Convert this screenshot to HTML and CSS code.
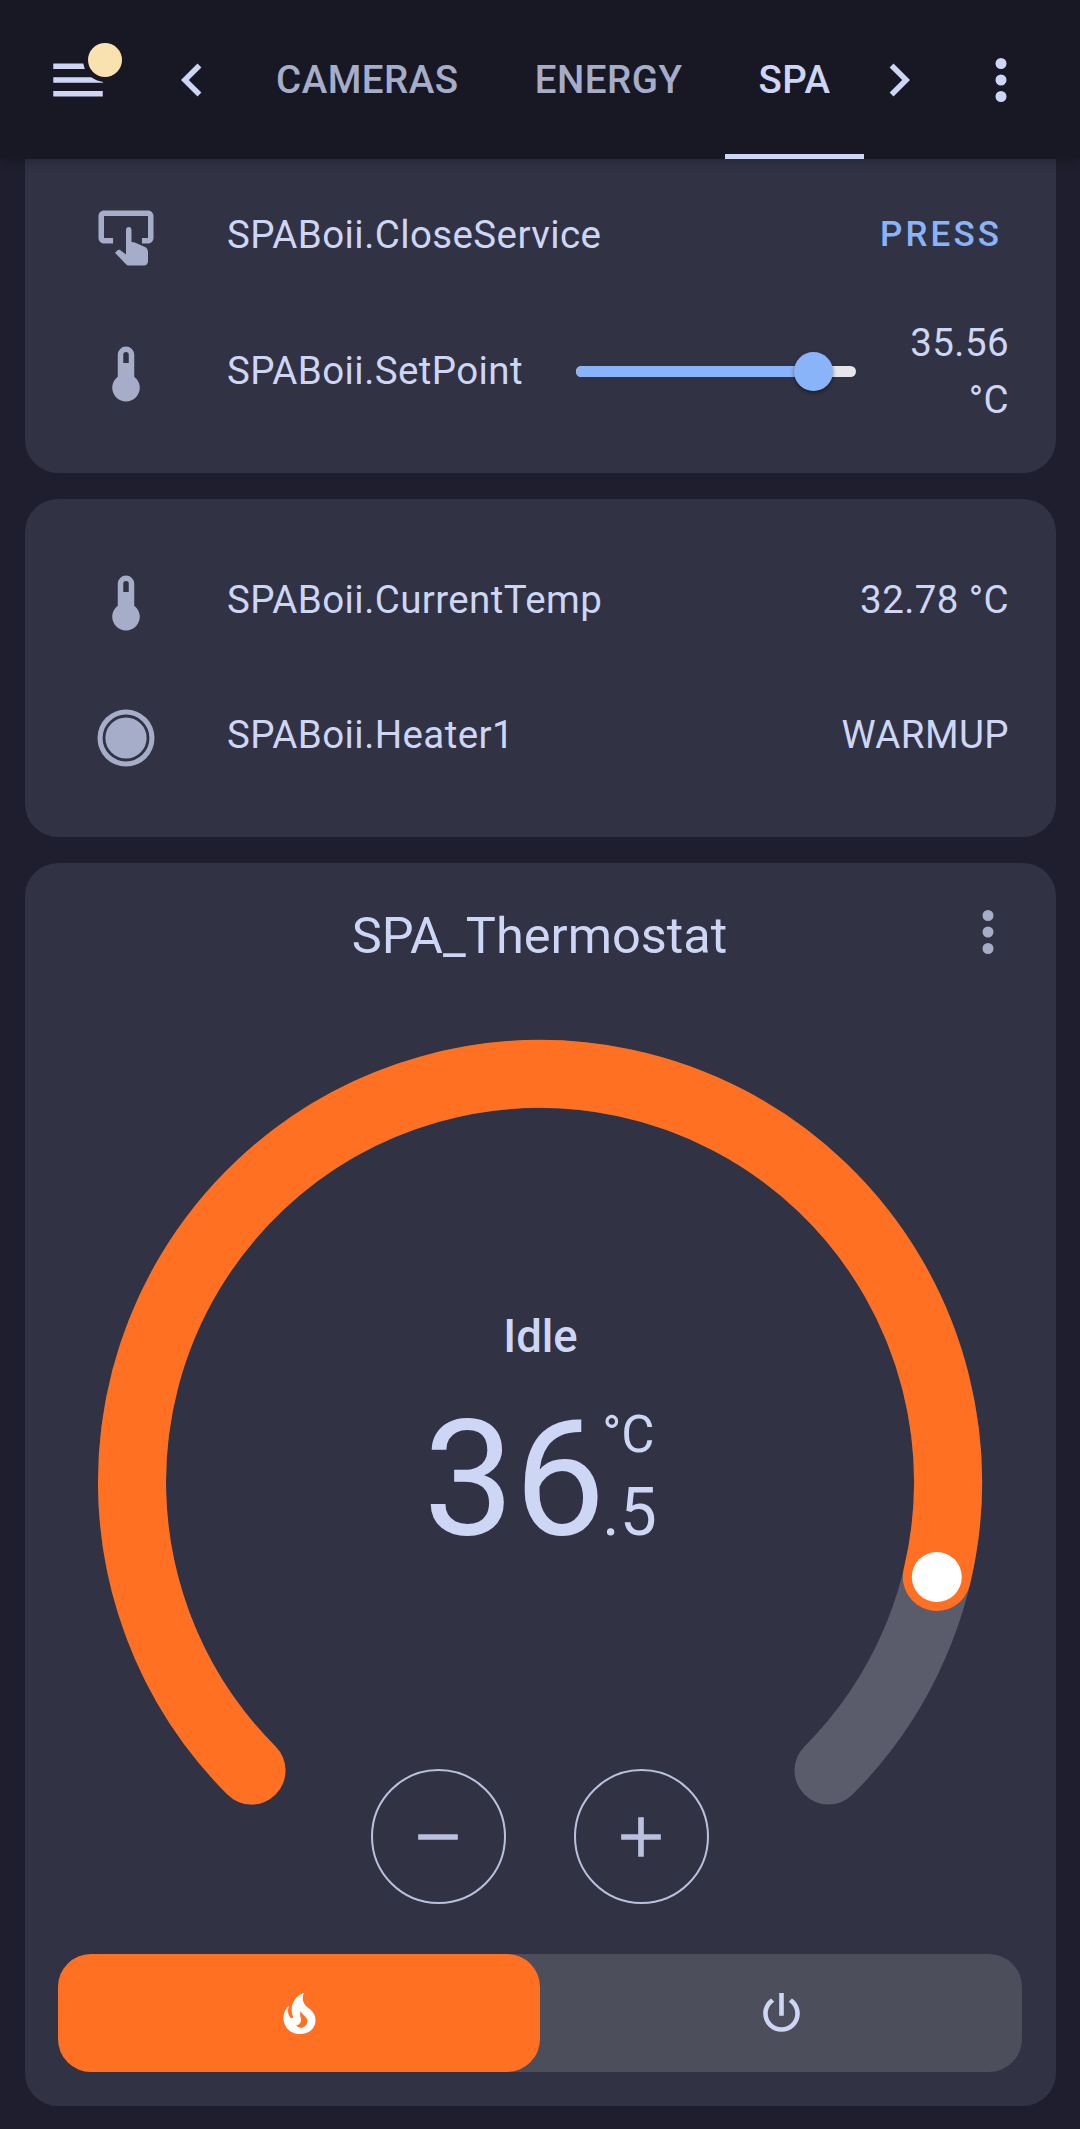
FILE: index.html
```html
<!DOCTYPE html>
<html lang="en">
<head>
<meta charset="utf-8">
<title>SPA</title>
<link rel="stylesheet" href="styles.css">
</head>
<body>
<header class="topbar">
  <div class="menu-btn">
    <svg class="icon icon--text" viewBox="0 0 24 24"><path d="M3 6H21V8H3ZM3 11H21V13H3ZM3 16H21V18H3Z"/></svg>
    <span class="badge"></span>
  </div>
  <svg class="icon icon--text chevron-left" viewBox="0 0 24 24"><path d="M15.41,16.58L10.83,12L15.41,7.41L14,6L8,12L14,18L15.41,16.58Z"/></svg>
  <nav class="tabs">
    <span class="tab">CAMERAS</span>
    <span class="tab">ENERGY</span>
    <span class="tab tab--active">SPA</span>
  </nav>
  <svg class="icon icon--text" viewBox="0 0 24 24"><path d="M8.59,16.58L13.17,12L8.59,7.41L10,6L16,12L10,18L8.59,16.58Z"/></svg>
  <svg class="icon icon--text topbar-dots" viewBox="0 0 24 24"><path d="M12,16A2,2 0 0,1 14,18A2,2 0 0,1 12,20A2,2 0 0,1 10,18A2,2 0 0,1 12,16M12,10A2,2 0 0,1 14,12A2,2 0 0,1 12,14A2,2 0 0,1 10,12A2,2 0 0,1 12,10M12,4A2,2 0 0,1 14,6A2,2 0 0,1 12,8A2,2 0 0,1 10,6A2,2 0 0,1 12,4Z"/></svg>
</header>

<main class="view">
  <section class="card card--scrolled">
    <div class="row">
      <svg class="icon icon--muted row-icon" viewBox="0 0 24 24"><path d="M7.3 14H4C2.9 14 2 13.1 2 12V4C2 2.9 2.9 2 4 2H20C21.1 2 22 2.9 22 4V12C22 13.1 21.1 14 20 14H17.8V12H20V4H4V12H7.3V14Z"/><path d="M12 9C12 8.45 12.45 8 13 8S14 8.45 14 9V13.47L15.21 13.6L18.9 15.3C19.6 15.6 20 16.3 20 17V20.5C19.97 21.32 19.32 22 18.5 22H13C12.62 22 12.26 21.85 12 21.57L8 17.37L8.74 16.6C8.93 16.39 9.2 16.28 9.5 16.28H9.7L12 18V9Z"/></svg>
      <span class="row-label">SPABoii.CloseService</span>
      <span class="press">PRESS</span>
    </div>
    <div class="row">
      <svg class="icon icon--muted row-icon" viewBox="0 0 24 24"><path d="M15 13V5A3 3 0 0 0 9 5V13A5 5 0 1 0 15 13M12 4A1 1 0 0 1 13 5V8H11V5A1 1 0 0 1 12 4Z"/></svg>
      <span class="row-label">SPABoii.SetPoint</span>
      <div class="slider"><div class="slider-fill" style="width:85%"><span class="slider-thumb"></span></div></div>
      <span class="row-value row-value--wrap">35.56 °C</span>
    </div>
  </section>

  <section class="card card--pair">
    <div class="row">
      <svg class="icon icon--muted row-icon" viewBox="0 0 24 24"><path d="M15 13V5A3 3 0 0 0 9 5V13A5 5 0 1 0 15 13M12 4A1 1 0 0 1 13 5V8H11V5A1 1 0 0 1 12 4Z"/></svg>
      <span class="row-label">SPABoii.CurrentTemp</span>
      <span class="row-value">32.78 °C</span>
    </div>
    <div class="row">
      <svg class="icon icon--muted row-icon" viewBox="0 0 66 66"><circle cx="33" cy="33" r="28.5"/><circle class="ring-gap" cx="33" cy="33" r="22"/></svg>
      <span class="row-label">SPABoii.Heater1</span>
      <span class="row-value">WARMUP</span>
    </div>
  </section>

  <section class="card card--climate">
    <div class="climate-head">
      <h2 class="climate-title">SPA_Thermostat</h2>
      <svg class="icon icon--muted climate-dots" viewBox="0 0 24 24"><path d="M12,16A2,2 0 0,1 14,18A2,2 0 0,1 12,20A2,2 0 0,1 10,18A2,2 0 0,1 12,16M12,10A2,2 0 0,1 14,12A2,2 0 0,1 12,14A2,2 0 0,1 10,12A2,2 0 0,1 12,10M12,4A2,2 0 0,1 14,6A2,2 0 0,1 12,8A2,2 0 0,1 10,6A2,2 0 0,1 12,4Z"/></svg>
    </div>
    <div class="gauge">
      <svg class="gauge-svg" viewBox="0 0 1031 769">
        <path class="gauge-track" d="M226.5 770.5A408 408 0 1 1 803.5 770.5"/>
        <path class="gauge-value" d="M226.5 770.5A408 408 0 1 1 911.8 577"/>
        <circle class="gauge-thumb" cx="911.8" cy="577" r="25"/>
      </svg>
      <div class="readout">
        <div class="readout-state">Idle</div>
        <div class="readout-temp">
          <span class="readout-int">36</span>
          <span class="readout-side">
            <span class="readout-unit">°C</span>
            <span class="readout-dec">.5</span>
          </span>
        </div>
      </div>
    </div>
    <div class="stepper">
      <span class="step"><svg class="icon step-icon" viewBox="0 0 24 24"><path d="M19,13H5V11H19V13Z"/></svg></span>
      <span class="step"><svg class="icon step-icon" viewBox="0 0 24 24"><path d="M19,13H13V19H11V13H5V11H11V5H13V11H19V13Z"/></svg></span>
    </div>
    <div class="modes">
      <div class="mode mode--active"><svg class="mode-icon mode-icon--white" viewBox="0 0 24 24"><path d="M17.66 11.2C17.43 10.9 17.15 10.64 16.89 10.38C16.22 9.78 15.46 9.35 14.82 8.72C13.33 7.26 13 4.85 13.95 3C13 3.23 12.17 3.75 11.46 4.32C8.87 6.4 7.85 10.07 9.07 13.22C9.11 13.32 9.15 13.42 9.15 13.55C9.15 13.77 9 13.97 8.8 14.05C8.57 14.15 8.33 14.09 8.14 13.93C8.08 13.88 8.04 13.83 8 13.76C6.87 12.33 6.69 10.28 7.45 8.64C5.78 10 4.87 12.3 5 14.47C5.06 14.97 5.12 15.47 5.29 15.97C5.43 16.57 5.7 17.17 6 17.7C7.08 19.43 8.95 20.67 10.96 20.92C13.1 21.19 15.39 20.8 17.03 19.32C18.86 17.66 19.5 15 18.56 12.72L18.43 12.46C18.22 12 17.66 11.2 17.66 11.2M14.5 17.5C14.22 17.74 13.76 18 13.4 18.1C12.28 18.5 11.16 17.94 10.5 17.28C11.69 17 12.4 16.12 12.61 15.23C12.78 14.43 12.46 13.77 12.33 13C12.21 12.26 12.23 11.63 12.5 10.94C12.69 11.32 12.89 11.7 13.13 12C13.9 13 15.11 13.44 15.37 14.8C15.41 14.94 15.43 15.08 15.43 15.23C15.46 16.05 15.1 16.95 14.5 17.5H14.5Z"/></svg></div>
      <div class="mode"><svg class="mode-icon" viewBox="0 0 24 24"><path d="M16.56,5.44L15.11,6.89C16.84,7.94 18,9.83 18,12A6,6 0 0,1 12,18A6,6 0 0,1 6,12C6,9.83 7.16,7.94 8.88,6.88L7.44,5.44C5.36,6.88 4,9.28 4,12A8,8 0 0,0 12,20A8,8 0 0,0 20,12C20,9.28 18.64,6.88 16.56,5.44M13,3H11V13H13"/></svg></div>
    </div>
  </section>
</main>
</body>
</html>
```

FILE: styles.css
```css
* { box-sizing: border-box; }

html, body {
  margin: 0;
  height: 2129px;
  overflow: hidden;
  background: #1e1e2e;
  color: #cdd6f4;
  font-family: Roboto, "Liberation Sans", sans-serif;
}

.icon { width: 66px; height: 66px; flex: none; display: block; }
.icon--text { fill: #cdd6f4; }
.icon--muted { fill: #a6adc8; }

/* Top bar */
.topbar {
  display: flex;
  align-items: center;
  height: 159px;
  padding-left: 45px;
  background: #181825;
  box-shadow: 0 3px 10px rgba(0, 0, 0, 0.22);
  position: relative;
  z-index: 1;
}
.menu-btn { position: relative; flex: none; }
.badge {
  position: absolute;
  left: 43px;
  top: -4px;
  width: 34px;
  height: 34px;
  border-radius: 50%;
  background: #f9e2af;
  box-shadow: 0 0 0 5px #181825;
}
.chevron-left { margin-left: 48px; }
.tabs {
  display: flex;
  align-self: stretch;
  gap: 10px;
  flex: 1;
  padding-left: 18px;
}
.tab {
  display: flex;
  align-items: center;
  height: 100%;
  padding: 0 33px;
  font-size: 38.5px;
  font-weight: 500;
  letter-spacing: 0.5px;
  color: #a6adc8;
}
.tab--active {
  color: #cdd6f4;
  box-shadow: inset 0 -5px 0 #cdd6f4;
}
.topbar-dots { margin-left: 36px; margin-right: 46px; }

/* Cards */
.view {
  display: flex;
  flex-direction: column;
  gap: 26px;
  padding: 0 24px 0 25px;
}
.card {
  background: #313244;
  border-radius: 33px;
}
.card--scrolled {
  border-radius: 0 0 33px 33px;
  padding: 8px 0 35px;
}
.card--scrolled .row + .row { margin-top: 1px; }
.card--pair { padding: 33px 0 35px; }
.card--climate { padding-bottom: 34px; }

.row {
  display: flex;
  align-items: center;
  height: 135px;
  padding: 0 47px 0 68px;
}
.row-icon { margin-top: 7px; }
.row-label {
  margin-left: 68px;
  font-size: 38.5px;
  letter-spacing: 0.4px;
  flex: 1;
  white-space: nowrap;
}
.row-value {
  font-size: 38.5px;
  letter-spacing: 0.4px;
  text-align: right;
  white-space: nowrap;
}
.row-value--wrap {
  width: 130px;
  white-space: normal;
  line-height: 57px;
  flex: none;
}
.press {
  margin-right: 7px;
  font-size: 35px;
  font-weight: 500;
  letter-spacing: 3.1px;
  color: #89b4fa;
}
.ring-gap {
  fill: none;
  stroke: #313244;
  stroke-width: 2.8;
}

.slider {
  flex: none;
  width: 280px;
  height: 11px;
  margin: 2px 23px 0 0;
  border-radius: 6px;
  background: #e6e6ea;
}
.slider-fill {
  position: relative;
  height: 100%;
  border-radius: 6px;
  background: #89b4fa;
}
.slider-thumb {
  position: absolute;
  right: -19px;
  top: -14px;
  width: 39px;
  height: 39px;
  border-radius: 50%;
  background: #89b4fa;
  box-shadow: 0 2px 4px rgba(0, 0, 0, 0.4);
}

/* Thermostat */
.climate-head {
  position: relative;
  height: 137px;
  padding: 40px 2px 0 0;
}
.climate-title {
  margin: 0;
  text-align: center;
  font-size: 50.5px;
  line-height: 66px;
  font-weight: 400;
}
.climate-dots {
  position: absolute;
  right: 35px;
  top: 36px;
}
.gauge { position: relative; height: 769px; }
.gauge-svg {
  display: block;
  width: 100%;
  height: 100%;
  overflow: visible;
}
.gauge-track, .gauge-value {
  fill: none;
  stroke-width: 68;
  stroke-linecap: round;
}
.gauge-track { stroke: #5a5c6b; }
.gauge-value { stroke: #ff7023; }
.gauge-thumb { fill: #fff; }

.readout {
  position: absolute;
  top: 315px;
  left: 0;
  right: 0;
  display: flex;
  flex-direction: column;
  align-items: center;
}
.readout-state {
  font-size: 45.5px;
  line-height: 44px;
  font-weight: 500;
}
.readout-temp {
  display: flex;
  margin: 38px 0 0 -1px;
}
.readout-int {
  font-size: 162px;
  line-height: 164px;
  font-weight: 400;
}
.readout-side {
  display: flex;
  flex-direction: column;
  justify-content: space-between;
  height: 137px;
  margin: 12px 0 0 -3px;
}
.readout-unit { font-size: 51px; line-height: 52px; font-weight: 400; }
.readout-dec { font-size: 66px; line-height: 66px; font-weight: 400; }

.stepper {
  display: flex;
  justify-content: center;
  gap: 68px;
  padding-right: 2px;
}
.step {
  display: flex;
  align-items: center;
  justify-content: center;
  width: 135px;
  height: 135px;
  border: 2px solid #b9c1de;
  border-radius: 50%;
}
.step-icon { width: 68px; height: 68px; fill: #b9c1de; }

.modes {
  display: flex;
  height: 118px;
  margin: 50px 34px 0 33px;
  border-radius: 33px;
  background: #4c4e5c;
}
.mode {
  flex: 1;
  display: flex;
  align-items: center;
  justify-content: center;
  border-radius: 33px;
}
.mode--active { background: #ff7023; }
.mode-icon { width: 55px; height: 55px; fill: #cdd6f4; }
.mode-icon--white { fill: #fff; }
```
